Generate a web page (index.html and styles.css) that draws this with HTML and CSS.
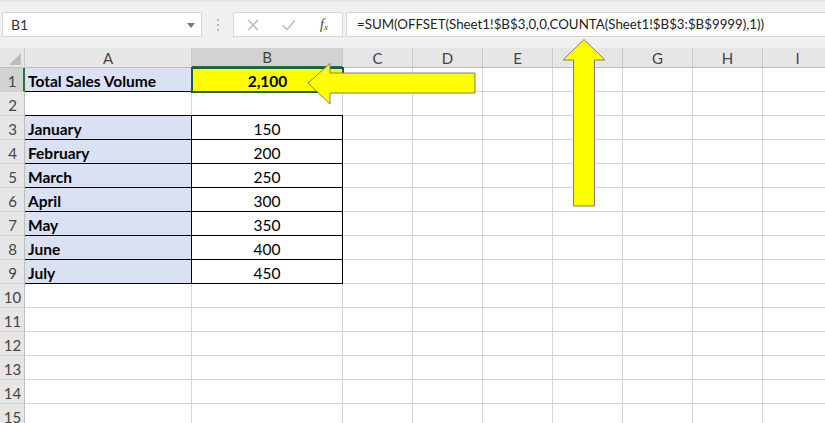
FILE: index.html
```html
<!DOCTYPE html>
<html>
<head>
<meta charset="utf-8">
<link rel="stylesheet" href="styles.css">
</head>
<body>
<div class="app">
  <div class="toolbar">
    <div class="namebox">
      <span class="name">B1</span>
      <svg class="dd" width="8" height="5" viewBox="0 0 8 5"><path d="M0 0H8L4 5Z" fill="#777"/></svg>
    </div>
    <div class="dots"><i></i><i></i><i></i></div>
    <div class="fbtns">
      <svg width="14" height="14" viewBox="0 0 14 14"><path d="M2 2L12 12M12 2L2 12" stroke="#b8b8b8" stroke-width="1.4"/></svg>
      <svg width="16" height="14" viewBox="0 0 16 14"><path d="M2 7.5L6 11.5L14 2.5" stroke="#b8b8b8" stroke-width="1.4" fill="none"/></svg>
      <span class="fx">f<sub>x</sub></span>
    </div>
    <div class="formula">=SUM(OFFSET(Sheet1!$B$3,0,0,COUNTA(Sheet1!$B$3:$B$9999),1))</div>
  </div>
  <div class="sheet">
    <div class="hd corner"><svg width="12" height="12" viewBox="0 0 12 12"><path d="M12 0V12H0Z" fill="#bdbdbd"/></svg></div>
    <div class="hd col">A</div>
    <div class="hd col sel">B</div>
    <div class="hd col">C</div>
    <div class="hd col">D</div>
    <div class="hd col">E</div>
    <div class="hd col">F</div>
    <div class="hd col">G</div>
    <div class="hd col">H</div>
    <div class="hd col">I</div>

    <div class="hd row rsel">1</div>
    <div class="c lab top1">Total Sales Volume</div>
    <div class="c total">2,100</div>
    <div class="c"></div><div class="c"></div><div class="c"></div><div class="c"></div><div class="c"></div><div class="c"></div><div class="c"></div>

    <div class="hd row">2</div>
    <div class="c"></div><div class="c"></div><div class="c"></div><div class="c"></div><div class="c"></div><div class="c"></div><div class="c"></div><div class="c"></div><div class="c"></div>

    <div class="hd row">3</div>
    <div class="c lab b first">January</div><div class="c num b first">150</div>
    <div class="c"></div><div class="c"></div><div class="c"></div><div class="c"></div><div class="c"></div><div class="c"></div><div class="c"></div>

    <div class="hd row">4</div>
    <div class="c lab b">February</div><div class="c num b">200</div>
    <div class="c"></div><div class="c"></div><div class="c"></div><div class="c"></div><div class="c"></div><div class="c"></div><div class="c"></div>

    <div class="hd row">5</div>
    <div class="c lab b">March</div><div class="c num b">250</div>
    <div class="c"></div><div class="c"></div><div class="c"></div><div class="c"></div><div class="c"></div><div class="c"></div><div class="c"></div>

    <div class="hd row">6</div>
    <div class="c lab b">April</div><div class="c num b">300</div>
    <div class="c"></div><div class="c"></div><div class="c"></div><div class="c"></div><div class="c"></div><div class="c"></div><div class="c"></div>

    <div class="hd row">7</div>
    <div class="c lab b">May</div><div class="c num b">350</div>
    <div class="c"></div><div class="c"></div><div class="c"></div><div class="c"></div><div class="c"></div><div class="c"></div><div class="c"></div>

    <div class="hd row">8</div>
    <div class="c lab b">June</div><div class="c num b">400</div>
    <div class="c"></div><div class="c"></div><div class="c"></div><div class="c"></div><div class="c"></div><div class="c"></div><div class="c"></div>

    <div class="hd row">9</div>
    <div class="c lab b">July</div><div class="c num b">450</div>
    <div class="c"></div><div class="c"></div><div class="c"></div><div class="c"></div><div class="c"></div><div class="c"></div><div class="c"></div>

    <div class="hd row">10</div>
    <div class="c"></div><div class="c"></div><div class="c"></div><div class="c"></div><div class="c"></div><div class="c"></div><div class="c"></div><div class="c"></div><div class="c"></div>
    <div class="hd row">11</div>
    <div class="c"></div><div class="c"></div><div class="c"></div><div class="c"></div><div class="c"></div><div class="c"></div><div class="c"></div><div class="c"></div><div class="c"></div>
    <div class="hd row">12</div>
    <div class="c"></div><div class="c"></div><div class="c"></div><div class="c"></div><div class="c"></div><div class="c"></div><div class="c"></div><div class="c"></div><div class="c"></div>
    <div class="hd row">13</div>
    <div class="c"></div><div class="c"></div><div class="c"></div><div class="c"></div><div class="c"></div><div class="c"></div><div class="c"></div><div class="c"></div><div class="c"></div>
    <div class="hd row">14</div>
    <div class="c"></div><div class="c"></div><div class="c"></div><div class="c"></div><div class="c"></div><div class="c"></div><div class="c"></div><div class="c"></div><div class="c"></div>
    <div class="hd row">15</div>
    <div class="c"></div><div class="c"></div><div class="c"></div><div class="c"></div><div class="c"></div><div class="c"></div><div class="c"></div><div class="c"></div><div class="c"></div>
  </div>
  <svg class="arrows" width="825" height="423" viewBox="0 0 825 423">
    <path d="M308 83L330 63.5V73H475V93H330V104Z" fill="#ffff00" stroke="#7f7f7f" stroke-width="1"/>
    <path d="M584 39.5L605 60H594.5V206H573.5V60H563Z" fill="#ffff00" stroke="#7f7f7f" stroke-width="1"/>
  </svg>
</div>
</body>
</html>
```
FILE: styles.css
```css
html, body {
  margin: 0;
  padding: 0;
  background: #ffffff;
  overflow: hidden;
}
.app {
  position: relative;
  width: 825px;
  height: 423px;
  overflow: hidden;
  font-family: Lato, "Liberation Sans", sans-serif;
}
.toolbar {
  height: 48px;
  background: #f0f0f0;
  border-top: 2px solid #e3e3e3;
  box-sizing: border-box;
  display: flex;
  align-items: flex-start;
  padding-top: 10px;
  padding-left: 2px;
}
.namebox {
  width: 200px;
  height: 25px;
  box-sizing: border-box;
  background: #fff;
  border: 1px solid #d6d6d6;
  display: flex;
  align-items: center;
  padding: 0 6px 0 8px;
}
.name {
  flex: 1;
  font-size: 14px;
  color: #333;
}
.dd { margin-top: 1px; }
.dots {
  width: 31px;
  height: 25px;
  display: flex;
  flex-direction: column;
  align-items: center;
  justify-content: center;
  gap: 3px;
}
.dots i {
  width: 2px;
  height: 2px;
  background: #b5b5b5;
  display: block;
}
.fbtns {
  width: 110px;
  height: 25px;
  box-sizing: border-box;
  background: #fff;
  border: 1px solid #d6d6d6;
  display: flex;
  align-items: center;
  gap: 21px;
  padding-left: 12px;
}
.fx {
  font-family: "Liberation Serif", serif;
  font-style: italic;
  font-size: 14px;
  color: #444;
  margin-left: 2px;
}
.fx sub { font-size: 9px; vertical-align: -1px; }
.formula {
  margin-left: 3px;
  flex: 1;
  height: 25px;
  box-sizing: border-box;
  background: #fff;
  border: 1px solid #d6d6d6;
  border-right: none;
  font-size: 13.3px;
  color: #222;
  padding-left: 10px;
  line-height: 23px;
  white-space: nowrap;
}
.sheet {
  display: grid;
  grid-template-columns: 25px 167px 151px repeat(7, 70px);
  grid-template-rows: 20px repeat(15, 24px);
  font-size: 15.5px;
}
.hd {
  background: #e6e6e6;
  color: #444;
  box-sizing: border-box;
  display: flex;
  align-items: center;
  justify-content: center;
}
.col {
  border-right: 1px solid #c9c9c9;
  border-bottom: 1px solid #bdbdbd;
  font-size: 15px;
}
.col.sel {
  background: #d2d2d2;
  border-bottom: 2px solid #217346;
  color: #444;
}
.corner {
  border-right: 1px solid #c9c9c9;
  border-bottom: 1px solid #bdbdbd;
  align-items: flex-end;
  justify-content: flex-end;
  padding: 0 3px 2px 0;
}
.row {
  border-right: 1px solid #bdbdbd;
  border-bottom: 1px solid #d4d4d4;
  font-size: 15px;
  padding: 2px 0 0 1px;
}
.row.rsel {
  background: #d2d2d2;
  border-right: 2px solid #217346;
}
.c {
  box-sizing: border-box;
  border-right: 1px solid #d4d4d4;
  border-bottom: 1px solid #d4d4d4;
  display: flex;
  align-items: center;
  white-space: nowrap;
  color: #000;
  padding-top: 2px;
}
.lab {
  background: #d9e1f2;
  font-weight: bold;
  padding-left: 3px;
}
.top1 {
  border-bottom: 1px solid #000;
}
.total {
  background: #ffff00;
  font-weight: bold;
  justify-content: center;
  border: 2px solid #1e5e3a;
  margin: -1px 0 0 -1px;
  width: 153px;
  height: 26px;
  position: relative;
  z-index: 1;
}
.num {
  justify-content: center;
}
.b {
  border-right: 1px solid #000;
  border-bottom: 1px solid #000;
}
.lab.b {
  border-right: 1px solid #000;
}
.first {
  border-top: 1px solid #000;
  margin-top: -1px;
  height: 25px;
}
.arrows {
  position: absolute;
  left: 0;
  top: 0;
  pointer-events: none;
  z-index: 5;
}
```
